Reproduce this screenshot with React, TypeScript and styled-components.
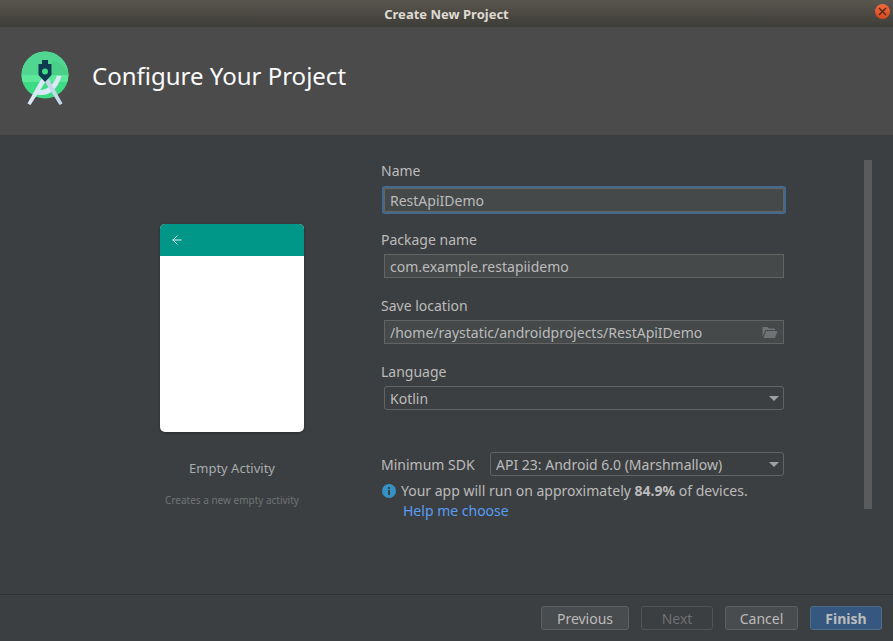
import React from "react";
import styled, { createGlobalStyle } from "styled-components";
import { ArrowLeft } from "lucide-react";

const GlobalStyle = createGlobalStyle`
    html, body {
        margin: 0;
        height: 100%;
        background: #3c3f41;
    }
    #root {
        height: 100%;
    }
`;

const FONT = `"Noto Sans", "Open Sans", "DejaVu Sans", sans-serif`;

const Window = styled.div`
    width: 893px;
    height: 641px;
    display: flex;
    flex-direction: column;
    overflow: hidden;
    font-family: ${FONT};
    font-size: 14px;
    color: #bbbbbb;
    background: #3c3f41;
`;

const TitleBar = styled.div`
    height: 27px;
    flex: none;
    position: relative;
    display: flex;
    align-items: center;
    justify-content: center;
    background: linear-gradient(#59564e, #3f3d38);
    color: #dfdbd2;
    font-size: 13px;
    font-weight: 700;
`;

const CloseButton = styled.div`
    position: absolute;
    top: 4px;
    right: 3px;
    width: 15px;
    height: 15px;
    border-radius: 50%;
    display: flex;
    align-items: center;
    justify-content: center;
    background: linear-gradient(#f2693c, #d8481d);
`;

const Header = styled.div`
    height: 108px;
    flex: none;
    display: flex;
    align-items: flex-start;
    gap: 19px;
    padding: 20px 0 0 17px;
    box-sizing: border-box;
    background: #4b4b4b;
`;

const HeaderTitle = styled.h1`
    margin: 12px 0 0;
    font-size: 24px;
    font-weight: 400;
    line-height: 34px;
    color: #fbfbfb;
`;

const Body = styled.div`
    flex: 1;
    display: flex;
    align-items: flex-start;
    min-height: 0;
    border-bottom: 1px solid #2f3133;
`;

const Preview = styled.div`
    width: 144px;
    margin-left: 160px;
    padding-top: 89px;
    display: flex;
    flex-direction: column;
    align-items: center;
    flex: none;
`;

const Phone = styled.div`
    width: 144px;
    height: 208px;
    border-radius: 5px;
    overflow: hidden;
    background: #ffffff;
    box-shadow: 0 1px 3px rgba(0, 0, 0, 0.3);
`;

const PhoneBar = styled.div`
    height: 32px;
    display: flex;
    align-items: center;
    padding-left: 10px;
    background: #009688;
    color: #ffffff;
`;

const PreviewTitle = styled.div`
    margin-top: 26px;
    font-size: 13px;
    line-height: 20px;
    color: #a7acaf;
    white-space: nowrap;
`;

const PreviewHint = styled.div`
    margin-top: 14px;
    font-size: 10px;
    line-height: 16px;
    color: #6f7476;
    white-space: nowrap;
`;

const FormPane = styled.div`
    width: 406px;
    height: 364px;
    margin: 25px 0 0 77px;
    padding-top: 1px;
    box-sizing: border-box;
    overflow: hidden;
    flex: none;
    display: flex;
    flex-direction: column;
`;

const FieldGroup = styled.div`
    margin-bottom: 18px;
    &:last-of-type {
        margin-bottom: 0;
    }
`;

const Label = styled.div`
    font-size: 14px;
    line-height: 20px;
    margin-bottom: 4px;
    white-space: nowrap;
`;

const TextBox = styled.div<{ $focused?: boolean }>`
    height: 24px;
    width: 400px;
    margin-left: 3px;
    margin-top: ${(p) => (p.$focused ? "7px" : "0")};
    box-sizing: border-box;
    display: flex;
    align-items: center;
    justify-content: space-between;
    padding: 0 5px;
    background: #45494a;
    border: 1px solid #646464;
    box-shadow: ${(p) => (p.$focused ? "0 0 0 2px #43688f" : "none")};
    border-radius: ${(p) => (p.$focused ? "1px" : "0")};
    white-space: nowrap;
`;

const Combo = styled.div<{ $width?: number }>`
    height: 24px;
    width: ${(p) => p.$width ?? 400}px;
    box-sizing: border-box;
    display: flex;
    align-items: center;
    justify-content: space-between;
    padding: 0 4px 0 5px;
    border: 1px solid #646464;
    border-radius: 3px;
    white-space: nowrap;
`;

const LanguageCombo = styled(Combo)`
    margin-left: 3px;
`;

const Caret = styled.span`
    width: 0;
    height: 0;
    border-left: 5.5px solid transparent;
    border-right: 5.5px solid transparent;
    border-top: 5.5px solid #a0a0a0;
`;

const Separator = styled.div`
    height: 1px;
    margin: 6px 0 18px;
    background: #515151;
`;

const SdkRow = styled.div`
    display: flex;
    align-items: center;
    justify-content: space-between;
    padding-right: 3px;
`;

const InfoRow = styled.div`
    margin-top: 5px;
    display: flex;
    align-items: center;
    gap: 5px;
    padding-left: 1px;
    line-height: 19px;
    white-space: nowrap;
`;

const HelpLink = styled.a`
    display: block;
    margin: 1px 0 0 22px;
    line-height: 19px;
    color: #589df6;
`;

const CheckRow = styled.div`
    margin: 18px 0 0 3px;
    display: flex;
    align-items: center;
    gap: 5px;
    white-space: nowrap;
`;

const CheckBox = styled.span`
    width: 14px;
    height: 14px;
    flex: none;
    box-sizing: border-box;
    border: 1px solid #6b6b6b;
    border-radius: 3px;
    background: #45494a;
`;

const HelpCircle = styled.span`
    width: 13px;
    height: 13px;
    box-sizing: border-box;
    border: 1px solid #8a8a8a;
    border-radius: 50%;
`;

const ScrollTrack = styled.div`
    width: 8px;
    height: 349px;
    margin: 25px 0 0 77px;
    flex: none;
    background: #595b5d;
`;

const Footer = styled.div`
    height: 46px;
    flex: none;
    display: flex;
    align-items: flex-start;
    justify-content: flex-end;
    gap: 12px;
    padding: 11px 11px 0 0;
    box-sizing: border-box;
`;

const Button = styled.div<{ $kind?: "disabled" | "primary"; $width: number }>`
    width: ${(p) => p.$width}px;
    height: 24px;
    box-sizing: border-box;
    display: flex;
    align-items: center;
    justify-content: center;
    border-radius: 3px;
    border: 1px solid ${(p) => (p.$kind === "primary" ? "#4c708c" : p.$kind === "disabled" ? "#515355" : "#5e6060")};
    background: ${(p) => (p.$kind === "primary" ? "#365880" : p.$kind === "disabled" ? "transparent" : "#494c4e")};
    color: ${(p) => (p.$kind === "disabled" ? "#6f7173" : "#bbbbbb")};
    font-weight: ${(p) => (p.$kind === "primary" ? 700 : 400)};
`;

const StudioLogo = () => (
    <svg width="56" height="60" viewBox="17 47 56 60" style={{ flex: "none" }}>
        <circle cx="45" cy="75" r="23.5" fill="#3ddc84" />
        <path d="M21.5 75a23.5 23.5 0 0 1 47 0z" fill="#50d690" />
        <path d="M21.6 75h46.8a23.5 23.5 0 0 1-1.2 7H22.8a23.5 23.5 0 0 1-1.2-7z" fill="#5ce79b" />
        <path d="M52 60a23.5 23.5 0 0 1 16.5 15H52z" fill="#48d088" />
        <path
            d="M37 94.5c10 2.5 20-3 24.5-18.5l-4.5-.5c-3 9-9.500 14.500-17.500 14.500z"
            fill="#dbe9f7"
        />
        <path d="M41.500 78.500 46 81 30.500 105 27.500 103.500z" fill="#dbe9f7" />
        <path d="M48.500 78.500 44.500 81 59.500 105 62.500 103.500z" fill="#c5d8ea" />
        <path d="M42 60h6v4h3.500v11L45 82l-6.500-7V64H42z" fill="#0e3a50" />
        <circle cx="45" cy="71.500" r="3" fill="#3ddc84" />
    </svg>
);

const FolderIcon = () => (
    <svg width="16" height="12" viewBox="0 0 16 12">
        <path d="M0.500 11V1h5l1.500 1.500h6V4H3.500L0.500 11z" fill="#6f7274" />
        <path d="M1.500 12 4 5h11.500L13 12z" fill="#6f7274" />
    </svg>
);

const InfoIcon = () => (
    <svg width="14" height="14" viewBox="0 0 14 14" style={{ flex: "none" }}>
        <circle cx="7" cy="7" r="7" fill="#3592c4" />
        <rect x="6" y="3" width="2" height="2" fill="#3c3f41" />
        <rect x="6" y="6" width="2" height="5" fill="#3c3f41" />
    </svg>
);

const App = () => {
    return (
        <Window>
            <GlobalStyle />
            <TitleBar>
                Create New Project
                <CloseButton>
                    <svg width="9" height="9" viewBox="0 0 9 9">
                        <path d="M1 1l7 7M8 1L1 8" stroke="#43291c" strokeWidth="1.300" />
                    </svg>
                </CloseButton>
            </TitleBar>
            <Header>
                <StudioLogo />
                <HeaderTitle>Configure Your Project</HeaderTitle>
            </Header>
            <Body>
                <Preview>
                    <Phone>
                        <PhoneBar>
                            <ArrowLeft size={14} strokeWidth={1.500} />
                        </PhoneBar>
                    </Phone>
                    <PreviewTitle>Empty Activity</PreviewTitle>
                    <PreviewHint>Creates a new empty activity</PreviewHint>
                </Preview>
                <FormPane>
                    <FieldGroup>
                        <Label>Name</Label>
                        <TextBox $focused>RestApiIDemo</TextBox>
                    </FieldGroup>
                    <FieldGroup>
                        <Label>Package name</Label>
                        <TextBox>com.example.restapiidemo</TextBox>
                    </FieldGroup>
                    <FieldGroup>
                        <Label>Save location</Label>
                        <TextBox>
                            /home/raystatic/androidprojects/RestApiIDemo
                            <FolderIcon />
                        </TextBox>
                    </FieldGroup>
                    <FieldGroup>
                        <Label>Language</Label>
                        <LanguageCombo>
                            Kotlin
                            <Caret />
                        </LanguageCombo>
                    </FieldGroup>
                    <Separator />
                    <SdkRow>
                        Minimum SDK
                        <Combo $width={294}>
                            API 23: Android 6.0 (Marshmallow)
                            <Caret />
                        </Combo>
                    </SdkRow>
                    <InfoRow>
                        <InfoIcon />
                        <span>
                            Your app will run on approximately <b>84.9%</b> of devices.
                        </span>
                    </InfoRow>
                    <HelpLink>Help me choose</HelpLink>
                    <CheckRow>
                        <CheckBox />
                        Use legacy android.support libraries
                        <HelpCircle />
                    </CheckRow>
                </FormPane>
                <ScrollTrack />
            </Body>
            <Footer>
                <Button $width={88}>Previous</Button>
                <Button $width={72} $kind="disabled">Next</Button>
                <Button $width={73}>Cancel</Button>
                <Button $width={72} $kind="primary">Finish</Button>
            </Footer>
        </Window>
    );
};

export default App;
